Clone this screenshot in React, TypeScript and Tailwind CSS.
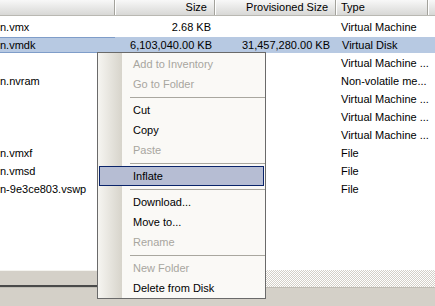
import React from "react";

type Row = {
  name: string;
  size?: string;
  prov?: string;
  type: string;
  selected?: boolean;
};

const rows: Row[] = [
  { name: "n.vmx", size: "2.68 KB", type: "Virtual Machine" },
  {
    name: "n.vmdk",
    size: "6,103,040.00 KB",
    prov: "31,457,280.00 KB",
    type: "Virtual Disk",
    selected: true,
  },
  { name: "", type: "Virtual Machine ..." },
  { name: "n.nvram", type: "Non-volatile me..." },
  { name: "", type: "Virtual Machine ..." },
  { name: "", type: "Virtual Machine ..." },
  { name: "", type: "Virtual Machine ..." },
  { name: "n.vmxf", type: "File" },
  { name: "n.vmsd", type: "File" },
  { name: "n-9e3ce803.vswp", type: "File" },
];

type Item = { label?: string; disabled?: boolean; active?: boolean; sep?: boolean };

const menu: Item[] = [
  { label: "Add to Inventory", disabled: true },
  { label: "Go to Folder", disabled: true },
  { sep: true },
  { label: "Cut" },
  { label: "Copy" },
  { label: "Paste", disabled: true },
  { sep: true },
  { label: "Inflate", active: true },
  { sep: true },
  { label: "Download..." },
  { label: "Move to..." },
  { label: "Rename", disabled: true },
  { sep: true },
  { label: "New Folder", disabled: true },
  { label: "Delete from Disk" },
];

function MenuRow({ item }: { item: Item }) {
  if (item.sep) {
    return (
      <div className="h-[6px] flex items-center pl-[32px]">
        <div className="h-px w-full bg-[#a9a79f]" />
      </div>
    );
  }

  if (item.active) {
    return (
      <div className="h-[20px] mx-[1px] flex items-center pl-[33px] border border-[#0a246a] bg-[#b6bdd3] text-black">
        {item.label}
      </div>
    );
  }

  return (
    <div
      className={`h-[20px] flex items-center pl-[35px] ${
        item.disabled ? "text-[#a8a69f]" : "text-black"
      }`}
    >
      {item.label}
    </div>
  );
}

export default function App() {
  return (
    <div className="w-[435px] h-[306px] relative overflow-hidden bg-white font-['Liberation_Sans',Arial,sans-serif] text-[11px] text-black leading-none">
      <div className="flex flex-col h-full">
        {/* column header */}
        <div className="h-[16px] flex bg-gradient-to-b from-[#f8f8f8] to-[#d8d8d6] border-b border-[#b9b8b2]">
          <div className="w-[115px] border-r border-[#a3a29c]" />
          <div className="w-[100px] flex items-center justify-end pr-[7px] border-r border-[#a3a29c] border-l border-l-white">
            Size
          </div>
          <div className="w-[121px] flex items-center justify-end pr-[7px] border-r border-[#a3a29c] border-l border-l-white">
            Provisioned Size
          </div>
          <div className="w-[92px] flex items-center pl-[4px] border-r border-[#a3a29c] border-l border-l-white">
            Type
          </div>
          <div className="flex-1 border-l border-l-white" />
        </div>

        {/* rows */}
        <div className="flex-1 pt-[2px]">
          {rows.map((r, i) => (
            <div key={i} className="h-[18px] flex py-[1px]">
              <div
                className={`w-[115px] flex items-center whitespace-nowrap ${
                  r.selected ? "bg-[#b7c9e2] border-y border-[#7f9dc9] mr-[1px]" : ""
                }`}
              >
                {r.name}
              </div>
              <div
                className={`w-[100px] flex items-center justify-end pr-[4px] whitespace-nowrap ${
                  r.selected ? "bg-[#b7c9e2] -ml-[1px] w-[101px]" : ""
                }`}
              >
                {r.size}
              </div>
              <div
                className={`w-[121px] flex items-center justify-end pr-[7px] whitespace-nowrap ${
                  r.selected ? "bg-[#b7c9e2]" : ""
                }`}
              >
                {r.prov}
              </div>
              <div
                className={`flex-1 flex items-center pl-[5px] whitespace-nowrap ${
                  r.selected ? "bg-[#b7c9e2]" : ""
                }`}
              >
                {r.type}
              </div>
            </div>
          ))}
        </div>

        {/* horizontal scrollbar */}
        <div className="h-[17px] flex bg-[image:repeating-conic-gradient(#d4d0c8_0%_25%,#ffffff_0%_50%)] bg-[length:2px_2px]">
          <div className="w-[180px] bg-[#d4d0c8] border-t border-t-[#f4f3ef] border-b-2 border-b-[#4a4a4a]" />
        </div>
        <div className="h-[19px] bg-[#d4d0c8] border-t border-[#bfbcb4]" />
      </div>

      {/* context menu */}
      <div className="absolute left-[97px] top-[52px] w-[169px] border border-[#6a6a6a] pt-[1px] bg-[linear-gradient(to_right,#f6f5f1_0px,#d7d4cb_24px,#faf9f6_24px)]">
        {menu.map((m, i) => (
          <MenuRow key={i} item={m} />
        ))}
      </div>
    </div>
  );
}
